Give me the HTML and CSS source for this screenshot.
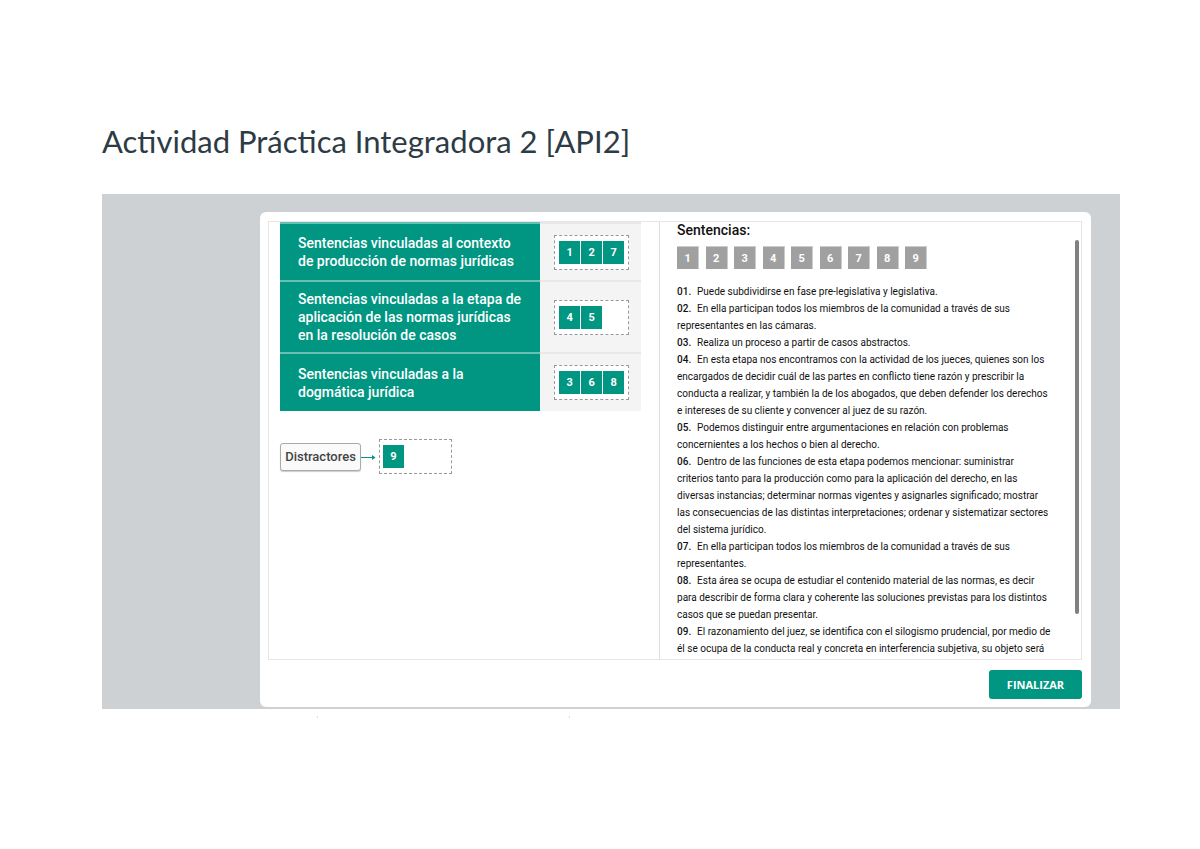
FILE: index.html
```
<!DOCTYPE html>
<html lang="es">
<head>
    <meta charset="UTF-8">
    <meta name="viewport" content="width=device-width, initial-scale=1.0">
    <title>Actividad Práctica Integradora 2 [API2]</title>
    <link rel="stylesheet" href="styles.css">
</head>
<body>

<h1>Actividad Práctica Integradora 2 [API2]</h1>

<main class="stage">
    <div class="card">
        <div class="panels">
            <section class="left">
                <table class="groups">
                    <tbody>
                        <tr>
                            <th scope="row">Sentencias vinculadas al contexto<br>de producción de normas jurídicas</th>
                            <td><div class="slot"><button class="tile">1</button><button class="tile">2</button><button class="tile">7</button></div></td>
                        </tr>
                        <tr>
                            <th scope="row">Sentencias vinculadas a la etapa de<br>aplicación de las normas jurídicas<br>en la resolución de casos</th>
                            <td><div class="slot"><button class="tile">4</button><button class="tile">5</button></div></td>
                        </tr>
                        <tr>
                            <th scope="row">Sentencias vinculadas a la<br>dogmática jurídica</th>
                            <td><div class="slot"><button class="tile">3</button><button class="tile">6</button><button class="tile">8</button></div></td>
                        </tr>
                    </tbody>
                </table>
                <div class="distractors">
                    <span class="label">Distractores</span>
                    <svg class="arrow" width="18" height="8" viewBox="0 0 18 8">
                        <path d="M0 4.5h12" stroke="#009681" stroke-width="1"/>
                        <path d="M11 2L14.5 4.5L11 7z" fill="#009681"/>
                    </svg>
                    <div class="slot"><button class="tile">9</button></div>
                </div>
            </section>

            <section class="right">
                <h2>Sentencias:</h2>
                <div class="numbers">
                    <button class="number">1</button>
                    <button class="number">2</button>
                    <button class="number">3</button>
                    <button class="number">4</button>
                    <button class="number">5</button>
                    <button class="number">6</button>
                    <button class="number">7</button>
                    <button class="number">8</button>
                    <button class="number">9</button>
                </div>
                <div class="sentences">
                    <p><b>01.</b>Puede subdividirse en fase pre-legislativa y legislativa.</p>
                    <p><b>02.</b>En ella participan todos los miembros de la comunidad a través de sus<br>representantes en las cámaras.</p>
                    <p><b>03.</b>Realiza un proceso a partir de casos abstractos.</p>
                    <p><b>04.</b>En esta etapa nos encontramos con la actividad de los jueces, quienes son los<br>encargados de decidir cuál de las partes en conflicto tiene razón y prescribir la<br>conducta a realizar, y también la de los abogados, que deben defender los derechos<br>e intereses de su cliente y convencer al juez de su razón.</p>
                    <p><b>05.</b>Podemos distinguir entre argumentaciones en relación con problemas<br>concernientes a los hechos o bien al derecho.</p>
                    <p><b>06.</b>Dentro de las funciones de esta etapa podemos mencionar: suministrar<br>criterios tanto para la producción como para la aplicación del derecho, en las<br>diversas instancias; determinar normas vigentes y asignarles significado; mostrar<br>las consecuencias de las distintas interpretaciones; ordenar y sistematizar sectores<br>del sistema jurídico.</p>
                    <p><b>07.</b>En ella participan todos los miembros de la comunidad a través de sus<br>representantes.</p>
                    <p><b>08.</b>Esta área se ocupa de estudiar el contenido material de las normas, es decir<br>para describir de forma clara y coherente las soluciones previstas para los distintos<br>casos que se puedan presentar.</p>
                    <p><b>09.</b>El razonamiento del juez, se identifica con el silogismo prudencial, por medio de<br>él se ocupa de la conducta real y concreta en interferencia subjetiva, su objeto será</p>
                </div>
                <div class="scrollbar"></div>
            </section>
        </div>
        <div class="actions">
            <button class="finish">FINALIZAR</button>
        </div>
    </div>
</main>
<div class="marks"><span></span><span></span></div>

</body>
</html>
```

FILE: styles.css
```
* {
    box-sizing: border-box;
}
body {
    margin: 0;
    padding: 117px 80px 0 102px;
    background-color: white;
    font-family: Roboto, "Liberation Sans", sans-serif;
}
button {
    border: none;
    padding: 0;
    font-family: inherit;
    cursor: pointer;
}
h1 {
    margin: 0 0 29px;
    font-family: Lato, sans-serif;
    font-size: 31px;
    font-weight: 400;
    line-height: 48px;
    color: #2d3b45;
}
.stage {
    padding: 18px 29px 2px 158px;
    background-color: #cdd1d4;
}
.card {
    padding: 9px 9px 8px 8px;
    border-radius: 6px;
    background-color: white;
}
.panels {
    display: grid;
    grid-template-columns: minmax(0, 392fr) minmax(0, 422fr);
    border: 1px solid #e6e6e6;
}

/* left side */
.left {
    padding: 0 18px 0 11px;
    border-right: 1px solid #dddddd;
}
.groups {
    width: 100%;
    border-collapse: collapse;
}
.groups th {
    height: 58px;
    padding: 8px 0 8px 18px;
    border-top: 2px solid #66c0b3;
    background-color: #009681;
    color: white;
    font-size: 14px;
    font-weight: 500;
    line-height: 18px;
    text-align: left;
    white-space: nowrap;
}
.groups td {
    width: 101px;
    padding: 0 12px 0 14px;
    border-top: 2px solid #e8e8e8;
    background-color: #f4f4f4;
}
.slot {
    display: flex;
    gap: 1px;
    width: 75px;
    height: 35px;
    padding: 5px 4px;
    border: 1px dashed #999999;
    background-color: white;
}
.tile {
    width: 21px;
    height: 23px;
    background-color: #009681;
    color: white;
    font-size: 11px;
    font-weight: 700;
}
.distractors {
    display: flex;
    align-items: center;
    margin-top: 28px;
}
.distractors .slot {
    width: 73px;
    padding: 5px 3px;
}
.label {
    width: 81px;
    height: 28px;
    border: 1px solid #aaaaaa;
    border-radius: 3px;
    box-shadow: 0 1px 1px #cccccc;
    background-color: #fafafa;
    color: #444444;
    font-size: 13px;
    font-weight: 500;
    line-height: 26px;
    text-align: center;
}

/* right side */
.right {
    position: relative;
    padding: 0 17px 2px;
}
h2 {
    margin: 0 0 8px;
    font-size: 14px;
    font-weight: 500;
    line-height: 16px;
    color: #111111;
}
.numbers {
    display: flex;
    justify-content: space-between;
    width: 250px;
    margin-bottom: 14px;
}
.number {
    width: 22px;
    height: 23px;
    border-top: 1px solid #cccccc;
    border-right: 1px solid #cccccc;
    background-color: #a0a0a0;
    color: white;
    font-size: 11px;
    font-weight: 700;
}
.sentences {
    font-size: 10px;
    line-height: 17px;
    color: #111111;
    white-space: nowrap;
}
.sentences p {
    margin: 0;
}
.sentences b {
    display: inline-block;
    width: 20px;
    font-weight: 500;
}
.scrollbar {
    position: absolute;
    top: 18px;
    right: 2px;
    bottom: 45px;
    width: 4px;
    border-radius: 2px;
    background-color: #808080;
}

.actions {
    display: flex;
    justify-content: flex-end;
    padding-top: 10px;
}
.finish {
    width: 93px;
    height: 29px;
    border-radius: 3px;
    background-color: #009681;
    color: white;
    font-family: "Open Sans", sans-serif;
    font-size: 11px;
    font-weight: 700;
}
.marks {
    display: flex;
    gap: 251px;
    padding: 7px 0 0 215px;
}
.marks span {
    width: 1px;
    height: 2px;
    background-color: #dddddd;
}
```
